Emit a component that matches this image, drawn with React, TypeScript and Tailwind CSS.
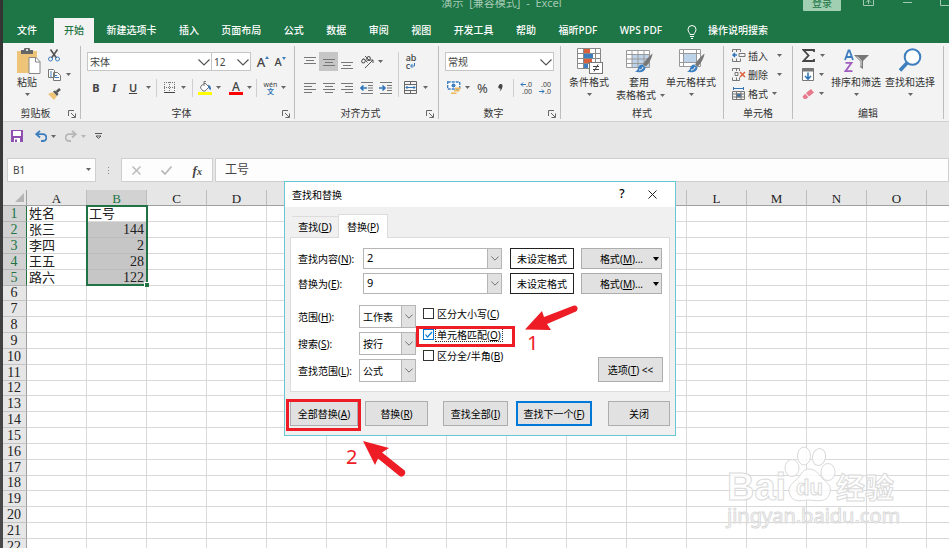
import React from "react";

type Kids = { children?: React.ReactNode };

const tabs = ["开始", "新建选项卡", "插入", "页面布局", "公式", "数据", "审阅", "视图", "开发工具", "帮助", "福昕PDF", "WPS PDF"];
const columns = ["A", "B", "C", "D", "E", "F", "G", "H", "I", "J", "K", "L", "M", "N", "O", "P"];
const cells: string[][] = [
  ["姓名", "工号"],
  ["张三", "144"],
  ["李四", "2"],
  ["王五", "28"],
  ["路六", "122"],
];

function Caret({ className = "" }: { className?: string }) {
  return (
    <svg viewBox="0 0 5 3" className={`h-[3px] w-[5px] shrink-0 ${className}`} aria-hidden="true">
      <path d="M0 0h5L2.5 3z" fill="#666" />
    </svg>
  );
}

function Chevron({ className = "" }: { className?: string }) {
  return (
    <svg viewBox="0 0 12 7" className={`pointer-events-none ${className}`} fill="none" stroke="#555" strokeWidth="1.2" aria-hidden="true">
      <path d="M.5.5 6 6l5.500-5.500" />
    </svg>
  );
}

function Sep({ className = "h-[18px]" }: { className?: string }) {
  return <span className={`w-px shrink-0 bg-[#cfcfcf] ${className}`} />;
}

function Tool({ label, className, children }: Kids & { label: string; className: string }) {
  return (
    <button type="button" aria-label={label} className={`flex h-[19px] shrink-0 items-center justify-center ${className}`}>
      {children}
    </button>
  );
}

function Group({ name, width, launcher, children }: Kids & { name: string; width: string; launcher?: boolean }) {
  return (
    <section aria-label={name} className={`flex h-[73px] shrink-0 flex-col border-r border-[#bdbdbd] ${width}`}>
      <div className="h-[59px]">{children}</div>
      <div className="flex h-[14px] items-center text-center leading-[14px]">
        <span className="flex-1 pt-[2px]">{name}</span>
        {launcher && (
          <button type="button" aria-label={`${name}设置`} className="w-[12px]">
            <svg viewBox="0 0 8 8" className="mt-[3px] h-2 w-2" fill="none" stroke="#666">
              <path d="M.5 6V.5H6M3 3l4 4M7.500 3.500v4h-4" />
            </svg>
          </button>
        )}
      </div>
    </section>
  );
}

function RibbonSelect({ label, value, width }: { label: string; value: string; width: string }) {
  return (
    <div className={`relative h-[19px] ${width}`}>
      <select aria-label={label} className="h-full w-full appearance-none rounded-none border border-[#c6c6c6] bg-white pl-[2px] text-[#444] outline-none">
        <option>{value}</option>
      </select>
      <Chevron className="absolute right-[2px] top-[7px] h-[7px] w-3" />
    </div>
  );
}

function Lines({ rows }: { rows: [number, number, number][] }) {
  return (
    <svg viewBox="0 0 14 14" className="h-[14px] w-[14px]" stroke="#777" strokeWidth="1">
      {rows.map(([x1, x2, y]) => (
        <path key={y} d={`M${x1} ${y}H${x2}`} />
      ))}
    </svg>
  );
}

function Indent({ back }: { back?: boolean }) {
  return (
    <svg viewBox="0 0 14 12" className="h-3 w-[14px]" fill="none" stroke="#777">
      <path d="M1 .5h12M8 3.500h5M8 6h5M8 8.500h5M1 11.500h12" />
      <path d={back ? "M7 6H1M3.500 3.500 1 6l2.500 2.500" : "M0 6h6M3.500 3.500 6 6l-2.500 2.500"} stroke="#2f75b8" strokeWidth="1.600" />
    </svg>
  );
}

function Brush() {
  return (
    <>
      <path d="M26.500 5.500c-4 3-7.500 7-9.500 11l3 2c3-3.500 6-8.500 6.500-13z" fill="#777" />
      <path d="M16.500 16.500c-3 0-4 2-4.500 4-.5 1.500-1.500 2.500-3 3 4 1.500 10 1 10.500-4z" fill="#3d7ebf" />
      <path d="M13 22c2 0 3.500-1 4-3" stroke="#fff" fill="none" />
    </>
  );
}

function BigTool({ icon, label, width, caret = true }: { icon: React.ReactNode; label: React.ReactNode; width: string; caret?: boolean }) {
  return (
    <button type="button" className={`flex shrink-0 flex-col items-center pt-[2px] ${width}`}>
      {icon}
      <span className="mt-[2px] leading-[13px]">{label}</span>
      {caret && <Caret className="mt-[4px]" />}
    </button>
  );
}

function CellTool({ icon, label, gap }: { icon: React.ReactNode; label: string; gap: string }) {
  return (
    <button type="button" className={`flex h-[19px] items-center ${gap}`}>
      <span className="flex items-center gap-[2px]">
        {icon}
        {label}
      </span>
      <Caret />
    </button>
  );
}

function Ribbon() {
  return (
    <div className="flex border-b border-[#d0d0d0] bg-[#f3f3f3] pb-[2px] pt-[3px] text-[#333]">
      <Group name="剪贴板" width="w-[78px]" launcher>
        <div className="flex">
          <BigTool
            width="w-[40px] ml-[4px]"
            label="粘贴"
            icon={
              <svg viewBox="0 0 24 26" className="ml-1 h-[26px] w-6">
                <rect x="0" y="3" width="20" height="22" fill="#eec479" />
                <path d="M4 2h3a3 3 0 0 1 6 0h3v4H4z" fill="#666" />
                <circle cx="10" cy="2" r="1" fill="#fff" />
                <path d="M12 9.500h7l4 4v12H12z" fill="#fff" stroke="#888" />
                <path d="M18.500 9.500V14H23" fill="none" stroke="#888" />
              </svg>
            }
          />
          <div className="flex flex-col">
            <Tool label="剪切" className="w-[14px]">
              <svg viewBox="0 0 12 13" className="h-[13px] w-3" fill="none">
                <path d="M2.500.5 8.500 9M9.500.5 3.500 9" stroke="#555" strokeWidth="1.600" />
                <circle cx="2.500" cy="10" r="2" stroke="#3d7ebf" />
                <circle cx="9.500" cy="10" r="2" stroke="#3d7ebf" />
              </svg>
            </Tool>
            <Tool label="复制" className="w-[24px] gap-[5px]">
              <svg viewBox="0 0 13 12" className="h-3 w-[13px]" fill="#fff" stroke="#777">
                <path d="M.5.5h5l1 1v7h-6zM5.500 3.500h4l3 3v5h-7z" />
                <path d="M2 3h2M2 5h2M2 7h2M7 6.500h2M7 8.500h4" stroke="#3d7ebf" />
              </svg>
              <Caret />
            </Tool>
            <Tool label="格式刷" className="w-[14px]">
              <svg viewBox="0 0 13 12" className="h-3 w-[13px]">
                <path d="m0 6 5-2 4 4-3 4C4 10 2 8 0 6z" fill="#eec479" />
                <path d="m5 3.500 2-1L10.500 6 9 8z" fill="#555" />
                <path d="m8.500 4 3.500-3" stroke="#555" strokeWidth="2.500" />
              </svg>
            </Tool>
          </div>
        </div>
      </Group>

      <Group name="字体" width="w-[214px]" launcher>
        <div className="flex flex-col gap-[7px] pl-[6px] pt-[6px]">
          <div className="flex">
            <RibbonSelect label="字体" value="宋体" width="w-[125px]" />
            <RibbonSelect label="字号" value="12" width="w-[40px] -ml-px" />
            <Tool label="增大字号" className="w-[20px] pl-1 text-[13px] font-medium text-[#444]">
              A<span className="mb-2 border-x-2 border-b-[3px] border-x-transparent border-b-[#3d7ebf]" />
            </Tool>
            <Tool label="减小字号" className="w-[18px] pt-px text-[11px] font-medium text-[#444]">
              A<span className="mb-2 border-x-2 border-t-[3px] border-x-transparent border-t-[#3d7ebf]" />
            </Tool>
          </div>
          <div className="flex items-center text-[11px] text-[#444]">
            <Tool label="加粗" className="w-[18px] font-bold">B</Tool>
            <Tool label="倾斜" className="w-[18px]">
              <span className="font-['Liberation_Serif',serif] text-[12px] font-bold italic">I</span>
            </Tool>
            <Tool label="下划线" className="w-[20px] font-semibold underline">U</Tool>
            <Tool label="下划线选项" className="w-[10px]"><Caret /></Tool>
            <Sep className="ml-[3px] h-[18px]" />
            <Tool label="边框" className="w-[35px] gap-[6px]">
              <svg viewBox="0 0 11 11" className="h-[11px] w-[11px]" stroke="#777">
                <path d="M.5 0v11M10.500 0v11M0 .5h11M5.500 0v11M0 5.500h11" strokeDasharray="1 1" />
                <path d="M0 10.500h11" stroke="#444" />
              </svg>
              <Caret />
            </Tool>
            <Sep />
            <Tool label="填充颜色" className="w-[32px] gap-[4px]">
              <svg viewBox="0 0 14 14" className="h-[14px] w-[14px]">
                <path d="m3 5 4-3 4 4-4 4H5L2.500 7z" fill="#fff" stroke="#777" />
                <path d="M6 5V.5h2" fill="none" stroke="#777" />
                <path d="M10 4c2.500 0 3 2 3 5l-2-1z" fill="#2f75b8" />
                <rect y="11" width="14" height="3" fill="#ff0" />
              </svg>
              <Caret />
            </Tool>
            <Tool label="字体颜色" className="w-[31px] gap-[4px]">
              <span className="flex h-[14px] w-[14px] items-center justify-center border-b-[3px] border-[#f00] text-[12px] font-medium leading-[11px]">A</span>
              <Caret />
            </Tool>
            <Sep />
            <Tool label="拼音指南" className="w-[36px] gap-[4px]">
              <span className="flex flex-col items-center text-[7px] leading-[7px]">
                <span>wén</span>
                <span className="font-bold text-[#2f75b8]">文</span>
              </span>
              <Caret />
            </Tool>
          </div>
        </div>
      </Group>

      <Group name="对齐方式" width="w-[144px]" launcher>
        <div className="flex items-center pl-[6px] pt-[6px]">
          <div className="flex flex-col gap-[7px]">
            <div className="flex">
              <Tool label="顶端对齐" className="w-[18px]"><Lines rows={[[1, 13, 2.5], [3, 11, 5.5], [1, 13, 8.5]]} /></Tool>
              <Tool label="垂直居中" className="w-[19px] bg-[#c6c6c6]"><Lines rows={[[1, 13, 4.5], [3, 11, 7.5], [1, 13, 10.5]]} /></Tool>
              <Tool label="底端对齐" className="w-[18px]"><Lines rows={[[1, 13, 7.5], [3, 11, 10.5], [1, 13, 13.5]]} /></Tool>
              <Tool label="方向" className="w-[31px] gap-[4px]">
                <svg viewBox="0 0 14 14" className="h-[14px] w-[14px]" fill="none" stroke="#555">
                  <ellipse cx="3.500" cy="6" rx="2" ry="1.700" transform="rotate(-45 3.500 6)" />
                  <path d="m3.500 3.500 4 4M5 1l5 5" />
                  <ellipse cx="8.500" cy="3.500" rx="2" ry="1.700" transform="rotate(-45 8.500 3.500)" />
                  <path d="m5 13 8-8M10 5h3v3" />
                </svg>
                <Caret />
              </Tool>
            </div>
            <div className="flex">
              <Tool label="左对齐" className="w-[18px]"><Lines rows={[[1, 13, 2.5], [1, 9, 5.5], [1, 13, 8.5], [1, 9, 11.5]]} /></Tool>
              <Tool label="居中" className="w-[19px]"><Lines rows={[[1, 13, 2.5], [3, 11, 5.5], [1, 13, 8.5], [3, 11, 11.5]]} /></Tool>
              <Tool label="右对齐" className="w-[18px]"><Lines rows={[[1, 13, 2.5], [5, 13, 5.5], [1, 13, 8.5], [5, 13, 11.5]]} /></Tool>
              <Tool label="减少缩进量" className="w-[21px]"><Indent back /></Tool>
              <Tool label="增加缩进量" className="w-[17px]"><Indent /></Tool>
            </div>
          </div>
          <Sep className="ml-[4px] h-[45px]" />
          <div className="flex flex-col gap-[7px] pl-[4px]">
            <Tool label="自动换行" className="w-[16px]">
              <span className="flex flex-col text-[9px] font-medium leading-[8px] text-[#444]">
                <span>ab</span>
                <span className="flex items-center">
                  c
                  <svg viewBox="0 0 5 5" className="h-[5px] w-[5px]" fill="none" stroke="#2f75b8"><path d="M4.500 0v3H1M2.500 1 .5 3l2 2" /></svg>
                </span>
              </span>
            </Tool>
            <Tool label="合并后居中" className="w-[26px] gap-[6px]">
              <svg viewBox="0 0 13 13" className="h-[13px] w-[13px]" fill="none" stroke="#666">
                <path d="M.5.500h12v12H.5zM.5 3.500h12M.5 9.500h12M6.500.5v3M6.500 9.500v3" />
                <path d="M2 6.500h9M3.500 5 2 6.500 3.500 8M9.500 5 11 6.500 9.500 8" stroke="#2f75b8" />
              </svg>
              <Caret />
            </Tool>
          </div>
        </div>
      </Group>

      <Group name="数字" width="w-[122px]" launcher>
        <div className="flex flex-col gap-[7px] pl-[6px] pt-[6px]">
          <RibbonSelect label="数字格式" value="常规" width="w-[109px]" />
          <div className="flex items-center text-[#444]">
            <Tool label="会计数字格式" className="w-[27px] gap-[4px]">
              <svg viewBox="0 0 14 14" className="h-[14px] w-[14px]">
                <rect x=".7" y="1" width="12" height="7" fill="#fff" stroke="#3d7ebf" strokeWidth="1.400" strokeDasharray="3 1" />
                <circle cx="6.500" cy="4.500" r="2" fill="#3d7ebf" />
                <path d="M8 6.500h5.500v2H8zM7 9h5.500v1.500H7zM4 11.500h5.500V13H4z" fill="#eeb95c" />
              </svg>
              <Caret />
            </Tool>
            <Tool label="百分比样式" className="w-[21px] text-[13px]">%</Tool>
            <Tool label="千位分隔样式" className="w-[14px]">
              <svg viewBox="0 0 5 8" className="h-2 w-[5px]"><path d="M1 1.500A1.500 1.500 0 0 1 4.500 2c0 2-1 4-3 5.500.8-1.500 1-2.500 1-3A1.700 1.700 0 0 1 1 1.500z" fill="#444" /></svg>
            </Tool>
            <Sep className="ml-[6px] h-[18px]" />
            <Tool label="增加小数位数" className="w-[24px]">
              <span className="flex flex-col items-end text-[7px] leading-[7px]">
                <span className="flex items-center">
                  <svg viewBox="0 0 6 5" className="h-[5px] w-[6px]" fill="none" stroke="#2f75b8"><path d="M6 2.500H1M3 .5l-2 2 2 2" /></svg>
                  .0
                </span>
                <span>.00</span>
              </span>
            </Tool>
            <Tool label="减少小数位数" className="w-[14px]">
              <span className="flex flex-col items-end text-[7px] leading-[7px]">
                <span>.00</span>
                <span className="flex items-center">
                  <svg viewBox="0 0 6 5" className="h-[5px] w-[6px]" fill="none" stroke="#2f75b8"><path d="M0 2.500h5M3 .5l2 2-2 2" /></svg>
                  .0
                </span>
              </span>
            </Tool>
          </div>
        </div>
      </Group>

      <Group name="样式" width="w-[163px]">
        <div className="flex pl-[5px]">
          <BigTool
            width="w-[46px]"
            label="条件格式"
            icon={
              <svg viewBox="0 0 27 26" className="ml-[2px] h-[26px] w-[27px]">
                <path d="M.5.5h23v20H.5zM.5 5.500h23M.5 10.500h23M.5 15.500h23M6.500.5v20M18.500.5v20" fill="#fff" stroke="#888" />
                <path d="M7 1h6v4H7zM7 11h8v4H7z" fill="#d9603b" />
                <path d="M7 6h9v4H7zM7 16h4v4H7z" fill="#3d7ebf" />
                <rect x="12.500" y="14.500" width="13" height="11" fill="#fff" stroke="#777" />
                <path d="M16 18.500h6M16 21.500h6M21 16.500l-4 7" stroke="#444" />
              </svg>
            }
          />
          <BigTool
            width="w-[50px] ml-[2px]"
            caret={false}
            label={<>套用<br /><span className="flex items-center gap-[4px] whitespace-nowrap pl-[3px]">表格格式 <Caret /></span></>}
            icon={
              <svg viewBox="0 0 27 26" className="h-[26px] w-[27px]">
                <path d="M.5 2.500h23v17H.5z" fill="#fff" />
                <path d="M6 7h17v12H6z" fill="#bdd3ea" />
                <path d="M.5 2.500h23v17H.5zM.5 6.500h23M.5 11h23M.5 15.500h23M6 2.500v17M12 2.500v17M18 2.500v17" fill="none" stroke="#999" />
                <Brush />
              </svg>
            }
          />
          <BigTool
            width="w-[54px]"
            label="单元格样式"
            icon={
              <svg viewBox="0 0 27 26" className="h-[26px] w-[27px]">
                <path d="M1.500 1.500h21v17h-21zM1.500 5.500h21M1.500 14.500h21M5.500 1.500v17M18.500 1.500v17" fill="#fff" stroke="#999" />
                <path d="M6 6h12v8H6z" fill="#bdd3ea" />
                <Brush />
              </svg>
            }
          />
        </div>
      </Group>

      <Group name="单元格" width="w-[69px]">
        <div className="flex flex-col pl-[8px]">
          <CellTool
            label="插入"
            gap="gap-[9px]"
            icon={
              <svg viewBox="0 0 14 13" className="h-[13px] w-[14px]" fill="none" stroke="#777">
                <path d="M.5 3V.5h8V3M4.500.500V3M.5 9.500v3h8v-3M4.500 9.500v3M7 4.500h6v3H7z" />
                <path d="M5 6H1M3 4 1 6l2 2" stroke="#2f75b8" strokeWidth="1.500" />
              </svg>
            }
          />
          <CellTool
            label="删除"
            gap="gap-[9px]"
            icon={
              <svg viewBox="0 0 14 13" className="h-[13px] w-[14px]" fill="none" stroke="#777">
                <path d="M.5 3V.5h7V3M4.500.500V3M.5 9.500v3h7v-3M4.500 9.500v3M3 4.500h3v3H3z" />
                <path d="m8 4 5 5M13 4 8 9" stroke="#d9603b" strokeWidth="1.500" />
              </svg>
            }
          />
          <CellTool
            label="格式"
            gap="gap-[4px]"
            icon={
              <svg viewBox="0 0 14 13" className="h-[13px] w-[14px]" fill="none" stroke="#777">
                <path d="M.5 4.500h12v8H.5zM.5 7h12M.5 10h12M4.500 4.500v8M9 4.500v8" />
                <path d="M5 7h4v3H5z" fill="#2f75b8" />
                <path d="M1.500 0v3M11.500 0v3M2 1.500h9" stroke="#2f75b8" />
              </svg>
            }
          />
        </div>
      </Group>

      <Group name="编辑" width="w-[151px]">
        <div className="flex">
          <div className="flex w-[36px] flex-col pl-[6px]">
            <Tool label="自动求和" className="w-[28px] gap-[5px]">
              <svg viewBox="0 0 13 13" className="h-[13px] w-[13px]" fill="none" stroke="#444" strokeWidth="1.800"><path d="M12 3V1H1.500l5 5.500-5 5.500H12v-2" /></svg>
              <Caret />
            </Tool>
            <Tool label="填充" className="w-[28px] gap-[5px]">
              <svg viewBox="0 0 12 13" className="h-[13px] w-3" fill="none" stroke="#777">
                <path d="M.5.5h11v12H.5z" fill="#fff" /><path d="M0 2h12" strokeWidth="3" />
                <path d="M6 4.500V11M3 8l3 3 3-3" stroke="#2f75b8" strokeWidth="1.600" />
              </svg>
              <Caret />
            </Tool>
            <Tool label="清除" className="w-[28px] gap-[5px]">
              <svg viewBox="0 0 12 12" className="h-3 w-3">
                <path d="m4 5 5-4 3 3.500-5 4z" fill="#e8798c" /><path d="m3.300 5.700 3 3.500L4 11H2L.5 8.500z" fill="#e8798c" />
              </svg>
              <Caret />
            </Tool>
          </div>
          <BigTool
            width="w-[54px]"
            label="排序和筛选"
            icon={
              <svg viewBox="0 0 26 26" className="h-[26px] w-[26px]" fill="none">
                <path d="m2 12 3.500-9.500h1L10 12M3.500 9h5" stroke="#3d7ebf" strokeWidth="1.800" />
                <path d="M2.500 14.800h6L2.500 23.200h7" stroke="#a05fc0" strokeWidth="1.800" />
                <path d="M11 7h15l-6 6v8l-3-2v-6z" fill="#777" />
                <path d="m14 8.500 4 4v6" stroke="#f3f3f3" />
              </svg>
            }
          />
          <BigTool
            width="w-[54px]"
            label="查找和选择"
            icon={
              <svg viewBox="0 0 26 26" className="h-[26px] w-[26px]" fill="none" stroke="#3d7ebf">
                <circle cx="15.500" cy="9" r="7.800" fill="#fff" strokeWidth="2" />
                <path d="m10 15-7 7.500" strokeWidth="3.500" />
              </svg>
            }
          />
        </div>
      </Group>
    </div>
  );
}

function TitleBar() {
  return (
    <header className="bg-[#1e7546] text-white">
      <div className="flex h-[18px] items-start overflow-hidden">
        <h1 className="flex-1 whitespace-pre pl-[197px] text-center text-[11px] leading-[6px] text-[#a3c9b3]">演示  [兼容模式]  -  Excel</h1>
        <button type="button" className="h-[11px] w-[38px] rounded-b-[1px] bg-[#a0cfb2] pb-[5px] leading-[6px] text-[#1e7546]">登录</button>
        <div className="flex w-[108px] justify-between pl-[22px] text-[#a3c9b3]">
          <button type="button" aria-label="功能区显示选项">
            <svg viewBox="0 0 11 6" className="block h-[6px] w-[11px]" fill="none" stroke="currentColor"><path d="M.5 0v5.500h10V0M5.500 0v4M3 2.500 5.500 0 8 2.500" /></svg>
          </button>
          <button type="button" aria-label="最小化">
            <svg viewBox="0 0 9 6" className="block h-[6px] w-[9px]" stroke="currentColor"><path d="M0 2.500h9" /></svg>
          </button>
          <button type="button" aria-label="最大化">
            <svg viewBox="0 0 9 6" className="block h-[6px] w-[9px]" fill="none" stroke="currentColor"><path d="M.5 0v5.500H9" /></svg>
          </button>
        </div>
      </div>
      <div className="flex h-[25px] items-stretch font-medium">
        <button type="button" className="w-[51px] pb-[2px] pr-[3px]">文件</button>
        <nav className="flex w-[618px] justify-between">
          {tabs.map((t, i) => (
            <button key={t} type="button" className={i === 0 ? "bg-[#f3f3f3] px-[10px] pb-[2px] text-[#1e7546]" : "whitespace-nowrap px-[10px] pb-[2px]"}>
              {t}
            </button>
          ))}
        </nav>
        <button type="button" className="ml-[15px] flex items-center gap-[11px] pb-[2px]">
          <svg viewBox="0 0 10 14" className="mt-1 h-[14px] w-[10px]" fill="none" stroke="#fff"><path d="M3 9.500C3 8 1 7 1 4.500a4 4 0 0 1 8 0C9 7 7 8 7 9.500zM3 11.500h4M4 13.500h2" /></svg>
          操作说明搜索
        </button>
      </div>
    </header>
  );
}

function QuickAccess() {
  return (
    <div className="flex h-[36px] items-center pb-[8px] pl-[7px]">
      <Tool label="保存" className="w-[13px]">
        <svg viewBox="0 0 12 12" className="h-3 w-3"><path d="M0 0h12v12H0z" fill="#8f4fb0" /><path d="M2 1h8v5H2zM3 8h6v4H3z" fill="#fff" /><path d="M4 9.500h2V12H4z" fill="#8f4fb0" /></svg>
      </Tool>
      <Tool label="撤消" className="ml-[11px] w-[22px] gap-[4px]">
        <svg viewBox="0 0 12 12" className="h-3 w-3" fill="none" stroke="#3d7ebf" strokeWidth="1.800"><path d="M5 .8 1.200 4.200 5 7.500M1.500 4.200H8a3.400 3.400 0 0 1 0 6.800H6" /></svg>
        <Caret />
      </Tool>
      <Tool label="恢复" className="ml-[8px] w-[22px] gap-[4px] opacity-60">
        <svg viewBox="0 0 12 12" className="h-3 w-3" fill="none" stroke="#999" strokeWidth="1.800"><path d="M7 .8l3.800 3.400L7 7.500M10.500 4.200H4A3.400 3.400 0 0 0 4 11h2" /></svg>
        <Caret className="opacity-60" />
      </Tool>
      <Tool label="自定义快速访问工具栏" className="ml-[5px] w-[14px]">
        <svg viewBox="0 0 7 7" className="h-[7px] w-[7px]" fill="none" stroke="#555"><path d="M0 .5h7M1 3l2.500 2.500L6 3z" /></svg>
      </Tool>
    </div>
  );
}

function FormulaBar() {
  return (
    <div className="flex h-[24px] pl-[4px] text-[#444]">
      <div className="relative w-[89px]">
        <input aria-label="名称框" defaultValue="B1" className="h-full w-full border border-[#cfcfcf] bg-[#fdfdfd] pl-[5px]" />
        <Caret className="absolute right-[5px] top-[10px]" />
      </div>
      <span className="flex w-[25px] flex-col items-center justify-center gap-[2px]">
        <i className="h-px w-px bg-[#888]" /><i className="h-px w-px bg-[#888]" /><i className="h-px w-px bg-[#888]" />
      </span>
      <div className="flex w-[92px] items-center justify-around border border-[#cfcfcf] bg-[#fdfdfd]">
        <button type="button" aria-label="取消"><svg viewBox="0 0 9 9" className="h-[9px] w-[9px]" stroke="#bbb" strokeWidth="1.500"><path d="m.5.500 8 8M8.500.500l-8 8" /></svg></button>
        <button type="button" aria-label="输入"><svg viewBox="0 0 11 9" className="h-[9px] w-[11px]" fill="none" stroke="#bbb" strokeWidth="1.800"><path d="m.5 4.500 3.500 3.500L10.500.5" /></svg></button>
        <button type="button" className="font-['Liberation_Serif',serif] text-[13px] font-bold italic leading-none">f<span className="text-[10px]">x</span></button>
      </div>
      <input aria-label="编辑栏" defaultValue="工号" className="ml-[2px] min-w-0 flex-1 border border-[#cfcfcf] bg-[#fdfdfd] pl-[9px] text-[12px]" />
    </div>
  );
}

function Sheet() {
  return (
    <div className="relative mt-[8px] min-h-0 flex-1 overflow-hidden bg-white font-['Liberation_Serif','Noto_Sans_CJK_SC',serif] text-[14px] text-[#222]">
      <table className="w-[984px] table-fixed border-separate border-spacing-0">
        <colgroup>
          <col className="w-[24px]" />
          {columns.map((c) => <col key={c} className="w-[60px]" />)}
        </colgroup>
        <thead>
          <tr className="h-[16px] bg-[#e6e6e6]">
            <th className="border-b border-r border-[#a0a0a0] p-0">
              <span className="ml-auto mr-[2px] block h-0 w-0 border-b-[9px] border-l-[9px] border-b-[#b5b5b5] border-l-transparent" />
            </th>
            {columns.map((c) => (
              <th key={c} scope="col" className={`border-b border-r border-b-[#a0a0a0] border-r-[#bdbdbd] p-0 pt-[2px] text-[13px] font-normal leading-[13px] ${c === "B" ? "bg-[#d2d2d2] text-[#217346]" : ""}`}>
                {c}
              </th>
            ))}
          </tr>
        </thead>
        <tbody className="[&>tr:nth-child(6n)]:h-[15px]">
          {Array.from({ length: 22 }, (_, r) => (
            <tr key={r} className="h-[16px]">
              <th scope="row" className={`border-b border-r p-0 pr-[1px] font-normal leading-[14px] ${r < 5 ? "border-b-[#b5b5b5] border-r-[#217346] bg-[#d2d2d2] text-[#217346]" : "border-b-[#c4c4c4] border-r-[#a0a0a0] bg-[#e6e6e6]"}`}>
                {r + 1}
              </th>
              {columns.map((c, i) => {
                const value = cells[r]?.[i];
                const numeric = i === 1 && r > 0;
                return (
                  <td key={c} className={`border-b border-r p-0 px-[2px] leading-[14px] ${numeric && r < 5 ? "border-[#bcbcbc] bg-[#c6c6c6]" : "border-[#d9d9d9]"} ${numeric ? "text-right" : "text-[13px]"}`}>
                    {value}
                  </td>
                );
              })}
            </tr>
          ))}
        </tbody>
      </table>
      <div className="pointer-events-none absolute left-[83px] top-[15px] h-[81px] w-[62px] border-2 border-[#217346]">
        <span className="absolute -bottom-[3px] -right-[3px] h-[5px] w-[5px] border-l border-t border-white bg-[#217346]" />
      </div>
      <svg viewBox="0 0 180 90" className="pointer-events-none absolute bottom-[15px] right-[44px] h-[90px] w-[180px] font-['Liberation_Sans','Noto_Sans_CJK_SC',sans-serif]" fill="#fff" fillOpacity=".8" stroke="#dadada" role="img" aria-label="Baidu 经验">
        <text x="2" y="57" fontSize="38" fontWeight="700">Bai</text>
        <ellipse cx="67" cy="25" rx="7" ry="8.500" />
        <ellipse cx="79" cy="13" rx="6.500" ry="9" />
        <ellipse cx="94" cy="14" rx="6.500" ry="8.500" transform="rotate(12 94 14)" />
        <ellipse cx="103" cy="29" rx="7" ry="8.500" />
        <path d="M84 26c8 0 10 7 15 11 6 4 8 9 5 15-3 7-10 6-20 5-10 1-16 2-19-5-3-7 1-11 6-15 5-4 6-11 13-11z" />
        <text x="71" y="52" fontSize="22" fontWeight="700">du</text>
        <text x="111" y="56" fontSize="29" fontWeight="700">经验</text>
        <text x="2" y="80" fontSize="20" className="font-['Noto_Sans']">jingyan.baidu.com</text>
      </svg>
    </div>
  );
}

function Key({ text, k, tail = "" }: { text: string; k: string; tail?: string }) {
  return <>{text}(<u>{k}</u>){tail}</>;
}

const grayButton = "h-[25px] border border-[#adadad] bg-[#e1e1e1] whitespace-nowrap";

function FieldRow({ id, text, k, value }: { id: string; text: string; k: string; value: string }) {
  return (
    <div className="flex h-[21px] items-center">
      <label htmlFor={id} className="w-[65px]"><Key text={text} k={k} tail=":" /></label>
      <div className="flex h-full w-[139px] border border-[#b5b5b5] bg-white">
        <input id={id} defaultValue={value} className="min-w-0 flex-1 pb-[2px] pl-[3px] text-[11px] outline-none" />
        <button type="button" aria-label={`${text}历史`} className="flex w-[14px] items-center justify-center border-l border-[#b5b5b5] bg-[#e1e1e1]">
          <Chevron className="h-[5px] w-2" />
        </button>
      </div>
      <output className="ml-[8px] flex h-full w-[64px] items-center justify-center border border-[#222] bg-white">未设定格式</output>
      <button type="button" className="ml-[7px] flex h-full w-[81px] items-center justify-end border border-[#adadad] bg-[#e1e1e1] pr-[2px]">
        <span className="pr-[10px]"><Key text="格式" k="M" tail="..." /></span>
        <span className="border-x-[3px] border-t-4 border-x-transparent border-t-black" />
      </button>
    </div>
  );
}

function OptionSelect({ id, text, k, value }: { id: string; text: string; k: string; value: string }) {
  return (
    <div className="flex h-[23px] items-center">
      <label htmlFor={id} className="w-[61px]"><Key text={text} k={k} tail=":" /></label>
      <div className="relative h-full w-[57px]">
        <select id={id} className="h-full w-full appearance-none rounded-none border border-[#b5b5b5] bg-white pl-[3px]">
          <option>{value}</option>
        </select>
        <span className="pointer-events-none absolute bottom-px right-px top-px flex w-[14px] items-center justify-center border-l border-[#b5b5b5] bg-[#e1e1e1]">
          <Chevron className="h-[5px] w-2" />
        </span>
      </div>
    </div>
  );
}

function Check({ text, k, checked }: { text: string; k: string; checked?: boolean }) {
  return (
    <label className="flex h-[13px] items-center gap-[2px]">
      <span className="relative h-[11px] w-[11px]">
        <input type="checkbox" defaultChecked={checked} className="block h-[11px] w-[11px] appearance-none border border-[#333] bg-white checked:border-[#0078d7]" />
        {checked && <svg viewBox="0 0 11 11" className="absolute inset-0 h-[11px] w-[11px]" fill="none" stroke="#0078d7" strokeWidth="1.200"><path d="m2.500 5.500 2 2.500 4.500-5" /></svg>}
      </span>
      <span className={`px-px leading-[12px] ${checked ? "outline-dotted outline-1 outline-[#333]" : ""}`}><Key text={text} k={k} /></span>
    </label>
  );
}

function FindReplaceDialog() {
  return (
    <div role="dialog" aria-label="查找和替换" className="absolute left-[284px] top-[181px] w-[392px] border border-[#6cc6d2] bg-[#f0f0f0] text-black">
      <div className="flex h-[25px] items-center bg-white pl-[7px]">
        <h2 className="flex-1">查找和替换</h2>
        <button type="button" aria-label="帮助" className="w-[28px] pb-[2px] pl-[6px] text-[12px] font-medium">?</button>
        <button type="button" aria-label="关闭窗口" className="flex w-[42px] justify-center pb-px pr-[4px]">
          <svg viewBox="0 0 9 9" className="h-[9px] w-[9px]" stroke="#222"><path d="m.5.500 8 8M8.500.500l-8 8" /></svg>
        </button>
      </div>
      <div className="flex items-end px-[5px] pt-[7px]">
        <button type="button" className="ml-[2px] h-[21px] w-[46px] border-t border-[#dcdcdc]"><Key text="查找" k="D" /></button>
        <button type="button" className="z-10 -mb-px h-[24px] w-[50px] border border-b-0 border-[#dcdcdc] bg-white"><Key text="替换" k="P" /></button>
      </div>
      <div className="mx-[5px] h-[155px] border border-[#dcdcdc] bg-white pl-[7px] pt-[10px]">
        <div className="flex flex-col gap-[4px]">
          <FieldRow id="find" text="查找内容" k="N" value="2" />
          <FieldRow id="replace" text="替换为" k="E" value="9" />
        </div>
        <div className="mt-[11px] flex">
          <div className="flex flex-col gap-[4px]">
            <OptionSelect id="scope" text="范围" k="H" value="工作表" />
            <OptionSelect id="order" text="搜索" k="S" value="按行" />
            <OptionSelect id="lookin" text="查找范围" k="L" value="公式" />
          </div>
          <div className="ml-[7px] mt-[2px] flex flex-col gap-[8px]">
            <Check text="区分大小写" k="C" />
            <Check text="单元格匹配" k="O" checked />
            <Check text="区分全/半角" k="B" />
          </div>
          <button type="button" className={`${grayButton} ml-auto mr-[6px] w-[65px] self-end`}><Key text="选项" k="T" tail=" <<" /></button>
        </div>
      </div>
      <div className="flex px-[5px] py-[9px]">
        <button type="button" className={`${grayButton} w-[68px]`}><Key text="全部替换" k="A" /></button>
        <button type="button" className={`${grayButton} ml-[7px] w-[63px]`}><Key text="替换" k="R" /></button>
        <button type="button" className={`${grayButton} ml-[15px] w-[65px]`}><Key text="查找全部" k="I" /></button>
        <button type="button" className="ml-[8px] h-[25px] w-[76px] border-2 border-[#0078d7] bg-[#e1e1e1]"><Key text="查找下一个" k="F" /></button>
        <button type="button" className={`${grayButton} ml-auto w-[62px]`}>关闭</button>
      </div>
    </div>
  );
}

function Annotations() {
  return (
    <div className="pointer-events-none text-[20px] leading-[20px] text-[#ee1c24]">
      <div className="absolute left-[416px] top-[326px] h-[21px] w-[99px] border-[3px] border-[#ee1c24]" />
      <div className="absolute left-[286px] top-[399px] h-[32px] w-[75px] border-[3px] border-[#ee1c24]" />
      <span className="absolute left-[527px] top-[333px]">1</span>
      <span className="absolute left-[346px] top-[447px]">2</span>
      <svg viewBox="0 0 54 26" className="absolute left-[524px] top-[304px] h-[26px] w-[54px]" fill="#ee1c24">
        <path d="M1 25.500 18 7l2 6L50 1.500c3.500-.8 5 4 2 6L23 20l4 6z" />
      </svg>
      <svg viewBox="0 0 43 36" className="absolute left-[363px] top-[441px] h-[36px] w-[43px]" fill="#ee1c24">
        <path d="m0 0 26 7-7 4.500L41 29c3.500 3-1 8.500-4.500 6L15 17.500 12 24z" />
      </svg>
    </div>
  );
}

export default function App() {
  return (
    <div className="relative flex h-screen overflow-hidden bg-[#e6e6e6] font-['Noto_Sans','Noto_Sans_CJK_SC',sans-serif] text-[10px] leading-[14px]">
      <div className="w-[3px] shrink-0 bg-linear-to-b from-[#333] to-[#4a4a4a]" />
      <main className="flex min-w-0 flex-1 flex-col">
        <TitleBar />
        <Ribbon />
        <QuickAccess />
        <FormulaBar />
        <Sheet />
      </main>
      <FindReplaceDialog />
      <Annotations />
    </div>
  );
}
